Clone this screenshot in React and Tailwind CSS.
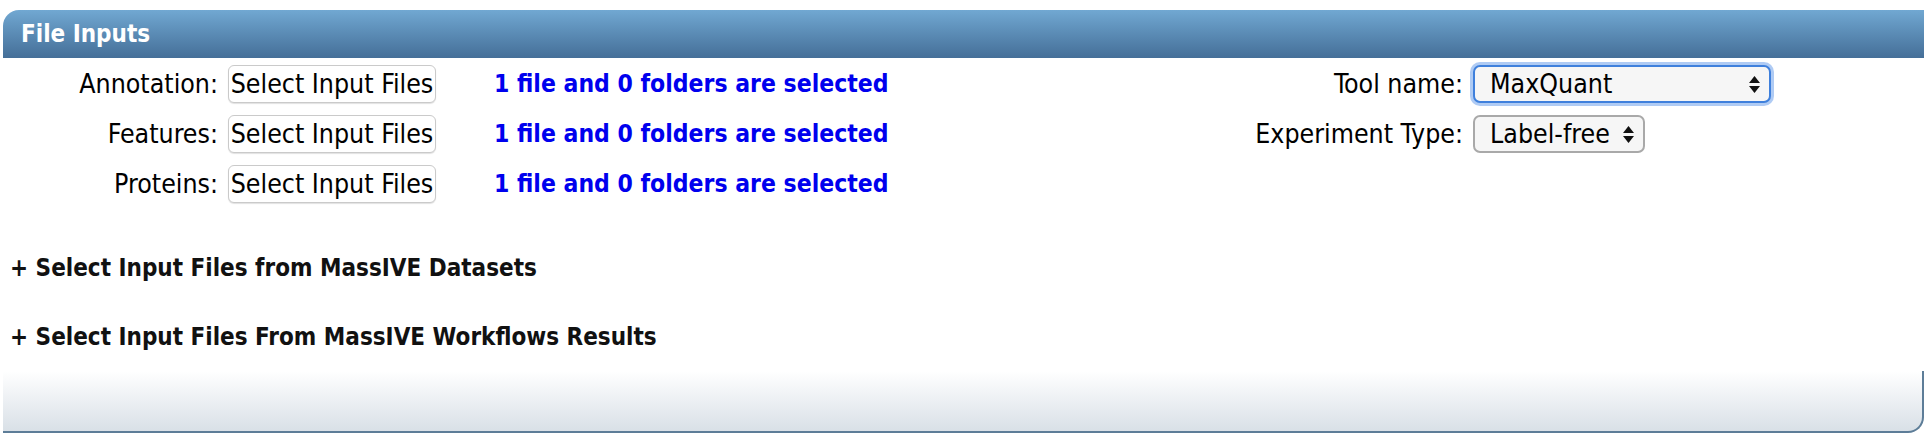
import React from 'react';

const font = "font-['DejaVu_Sans_Condensed','Liberation_Sans',sans-serif]";

const fileRows = ['Annotation:', 'Features:', 'Proteins:'];

// stacked up/down arrows drawn in the select boxes
const Arrows = () => (
  <svg width="13" height="19" viewBox="0 0 13 19" className="shrink-0">
    <path d="M6.5 1 L12 8 L1 8 Z" fill="#111" />
    <path d="M6.5 18 L12 11 L1 11 Z" fill="#111" />
  </svg>
);

const SelectBox = ({ value, focused, className }) => (
  <div
    className={`flex items-center justify-between h-[38px] rounded-[7px] bg-[#f6f6f6] pl-[15px] pr-[8px] ${
      focused
        ? 'border-2 border-[#3f80dc] shadow-[0_0_0_3px_rgba(110,160,235,0.55)]'
        : 'border-2 border-[#a9a9a9]'
    } ${className}`}
  >
    <span className="text-[26.5px] leading-none text-black">{value}</span>
    <Arrows />
  </div>
);

const App = () => {
  return (
    <div className={`w-[1930px] h-[442px] bg-white pt-[10px] ${font}`}>
      <div className="ml-[3px] w-[1921px]">
        {/* Header */}
        <div className="h-[48px] rounded-tl-[16px] bg-gradient-to-b from-[#71a8d2] to-[#456f98] flex items-center pl-[18px]">
          <h2 className="text-white font-bold text-[24px] leading-none">File Inputs</h2>
        </div>

        {/* Body */}
        <div className="flex pt-[7px]">
          <div className="flex-1 flex flex-col gap-[12px]">
            {fileRows.map((label) => (
              <div key={label} className="flex items-center h-[38px]">
                <span className="w-[215px] text-right text-[26.5px] text-black leading-none">{label}</span>
                <button className="ml-[10px] w-[208px] h-[38px] rounded-[6px] border border-[#cacaca] bg-white shadow-[0_1px_1px_rgba(0,0,0,0.12)] text-[26.5px] text-black leading-none whitespace-nowrap">
                  Select Input Files
                </button>
                <span className="ml-[58px] text-[24.5px] font-bold text-[#0000ee] leading-none">
                  1 file and 0 folders are selected
                </span>
              </div>
            ))}
          </div>
          <div className="w-[671px] flex flex-col gap-[12px] pr-[150px]">
            <div className="flex items-center">
              <span className="w-[210px] text-right text-[26.5px] text-black leading-none">Tool name:</span>
              <SelectBox value="MaxQuant" focused className="ml-[10px] w-[298px]" />
            </div>
            <div className="flex items-center">
              <span className="w-[210px] text-right text-[26.5px] text-black leading-none">Experiment Type:</span>
              <SelectBox value="Label-free" className="ml-[10px] w-[172px]" />
            </div>
          </div>
        </div>

        {/* Expanders */}
        <div className="pl-[7px] mt-[50px] text-[24px] font-bold text-[#111] leading-[30px]">
          <div>+ Select Input Files from MassIVE Datasets</div>
          <div className="mt-[39px]">+ Select Input Files From MassIVE Workflows Results</div>
        </div>

        {/* Footer */}
        <div className="mt-[19px] h-[62px] rounded-br-[16px] border-r-2 border-b-2 border-[#5d7d98] bg-gradient-to-b from-white to-[#d9e0e7]" />
      </div>
    </div>
  );
};

export default App;
